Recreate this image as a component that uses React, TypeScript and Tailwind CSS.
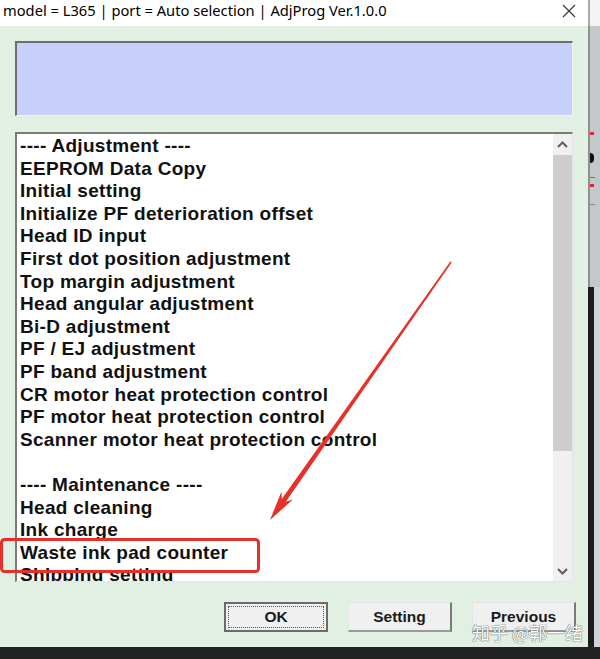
import React from "react";

const items: string[] = [
  "---- Adjustment ----",
  "EEPROM Data Copy",
  "Initial setting",
  "Initialize PF deterioration offset",
  "Head ID input",
  "First dot position adjustment",
  "Top margin adjustment",
  "Head angular adjustment",
  "Bi-D adjustment",
  "PF / EJ adjustment",
  "PF band adjustment",
  "CR motor heat protection control",
  "PF motor heat protection control",
  "Scanner motor heat protection control",
  "",
  "---- Maintenance ----",
  "Head cleaning",
  "Ink charge",
  "Waste ink pad counter",
  "Shipping setting",
];

function Chevron({ up }: { up?: boolean }) {
  return (
    <svg width="11" height="7" viewBox="0 0 11 7">
      <path
        d={up ? "M1 6 L5.5 1.5 L10 6" : "M1 1 L5.5 5.5 L10 1"}
        fill="none"
        stroke="#5f5f5f"
        strokeWidth="2"
      />
    </svg>
  );
}

function Btn({ label, def }: { label: string; def?: boolean }) {
  if (def) {
    return (
      <div className="flex h-[30px] w-[104px] items-center justify-center border-2 border-[#6b6b6b] bg-[#f0f0f0] p-[2px]">
        <div className="flex h-full w-full items-center justify-center border border-dotted border-[#555]">
          <span className="font-['Liberation_Sans',Arial,sans-serif] text-[15.5px] font-bold leading-none text-[#1a1a1a]">
            {label}
          </span>
        </div>
      </div>
    );
  }
  return (
    <div className="flex h-[30px] w-[104px] items-center justify-center border-t border-l border-r-2 border-b-2 border-t-[#e6e6e6] border-l-[#e6e6e6] border-r-[#7a7a7a] border-b-[#9a9a9a] bg-[#f0f0f0]">
      <span className="font-['Liberation_Sans',Arial,sans-serif] text-[15.5px] font-bold leading-none text-[#1a1a1a]">
        {label}
      </span>
    </div>
  );
}

export default function App() {
  return (
    <div className="relative flex h-[659px] w-[600px] flex-col overflow-hidden bg-[#222222]">
      <div className="flex h-[647px] w-full">
        {/* window */}
        <div className="flex w-[588px] flex-col">
          <div className="flex h-[26px] items-start justify-between bg-white pl-[3px] pr-[12px]">
            <span className="pt-[1px] font-['Noto_Sans',sans-serif] text-[14.7px] leading-[18px] text-black">
              model = L365 | port = Auto selection | AdjProg Ver.1.0.0
            </span>
            <svg width="14" height="14" viewBox="0 0 14 14" className="mt-[4px]">
              <path d="M1 1 L13 13 M13 1 L1 13" stroke="#333" strokeWidth="1.1" />
            </svg>
          </div>
          <div className="flex flex-1 flex-col bg-[#e1f0e3] px-[15px] pt-[15px]">
            <div className="h-[75px] border-t-2 border-l-2 border-r border-b border-t-[#6e6e6e] border-l-[#6e6e6e] border-r-[#f2f2f2] border-b-[#f2f2f2] bg-[#c6d0fa]" />
            <div className="mt-[16px] flex h-[450px] border-t-2 border-l-2 border-r border-b border-t-[#7a7a7a] border-l-[#7a7a7a] border-r-[#e6e6e6] border-b-[#e6e6e6] bg-white">
              <div className="flex-1 overflow-hidden pl-[3px] pt-[1px]">
                {items.map((t, i) => (
                  <div
                    key={i}
                    className="h-[22.6px] whitespace-nowrap font-['Liberation_Sans',Arial,sans-serif] text-[19px] font-bold leading-[22.6px] tracking-[0.3px] text-[#111]"
                  >
                    {t}
                  </div>
                ))}
              </div>
              <div className="flex w-[19px] flex-col bg-[#f0f0f0]">
                <div className="flex h-[21px] items-center justify-center">
                  <Chevron up />
                </div>
                <div className="h-[296px] bg-[#cdcdcd]" />
                <div className="flex-1" />
                <div className="flex h-[20px] items-center justify-center">
                  <Chevron />
                </div>
              </div>
            </div>
            <div className="-mr-[3px] mt-[20px] flex justify-end gap-[20px]">
              <Btn label="OK" def />
              <Btn label="Setting" />
              <Btn label="Previous" />
            </div>
          </div>
        </div>
        {/* strip of window behind */}
        <div className="flex w-[12px] flex-col">
          <div className="flex h-[26px]">
            <div className="w-[2px] bg-[#a8a8a8]" />
            <div className="flex-1 bg-[#f3f3f3]" />
          </div>
          <div className="flex h-[261px]">
            <div className="w-[2px] bg-[#8f8f8f]" />
            <div className="flex flex-1 flex-col bg-[#c4c8cb]">
              <div className="h-[106px]" />
              <div className="h-[3px] w-[4px] bg-[#d8302a]" />
              <div className="h-[18px]" />
              <div className="h-[10px] w-[4px] rounded-r-full bg-[#111]" />
              <div className="h-[14px]" />
              <div className="h-[1px] w-[5px] bg-[#777]" />
              <div className="h-[6px]" />
              <div className="h-[3px] w-[4px] bg-[#d8302a]" />
              <div className="h-[17px]" />
              <div className="h-[1px] w-[5px] bg-[#888]" />
            </div>
          </div>
          <div className="flex flex-1">
            <div className="w-[6px] bg-[#1c1c1c]" />
            <div className="flex-1 bg-[#cfd3d7]" />
          </div>
        </div>
      </div>
      <div className="h-[12px] w-full bg-[#222222]" />

      {/* annotations */}
      <svg
        className="pointer-events-none absolute left-0 top-0"
        width="600"
        height="659"
        viewBox="0 0 600 659"
      >
        <rect
          x="1.5"
          y="539.5"
          width="257"
          height="32"
          rx="3"
          fill="none"
          stroke="#e8302a"
          strokeWidth="3"
        />
        <polygon
          points="270,520 292.97,499.45 285.84,501.78 451.66,262.46 450.34,261.54 281.74,498.9 281.51,491.41"
          fill="#e8302a"
        />
      </svg>
      <div className="pointer-events-none absolute left-[472px] top-[621px] whitespace-nowrap font-['Noto_Sans_CJK_SC',sans-serif] text-[18px] leading-[22px] text-white [text-shadow:0_0_1px_#555,0_0_1px_#555]">
        知乎 @郭一绪
      </div>
    </div>
  );
}
